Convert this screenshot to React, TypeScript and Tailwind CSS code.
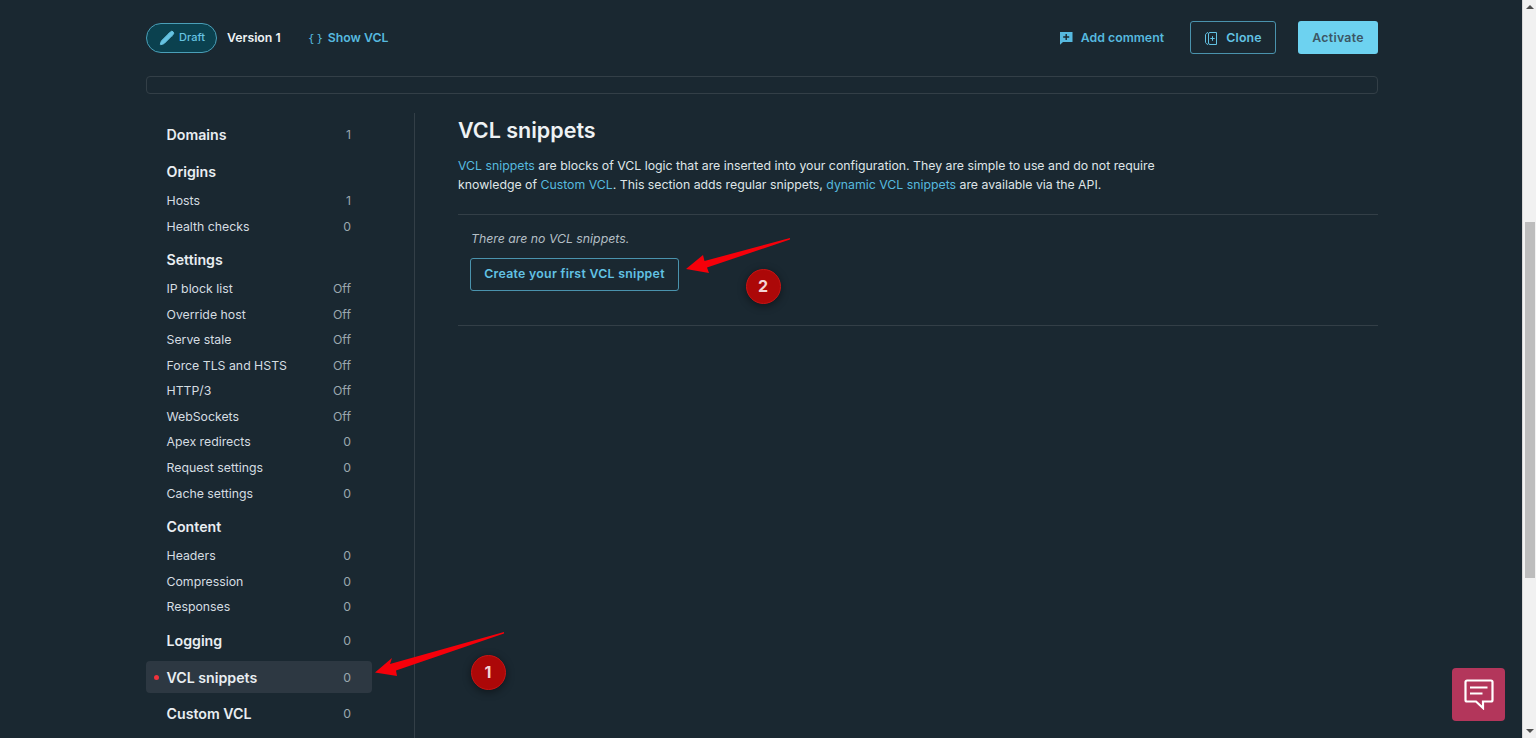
import { Pencil } from "lucide-react"

type Row = { label: string; value?: string }
type Section = { title: string; value?: string; active?: boolean; rows?: Row[] }

const sections: Section[] = [
  { title: "Domains", value: "1" },
  { title: "Origins", rows: [{ label: "Hosts", value: "1" }, { label: "Health checks", value: "0" }] },
  {
    title: "Settings",
    rows: [
      { label: "IP block list", value: "Off" },
      { label: "Override host", value: "Off" },
      { label: "Serve stale", value: "Off" },
      { label: "Force TLS and HSTS", value: "Off" },
      { label: "HTTP/3", value: "Off" },
      { label: "WebSockets", value: "Off" },
      { label: "Apex redirects", value: "0" },
      { label: "Request settings", value: "0" },
      { label: "Cache settings", value: "0" },
    ],
  },
  { title: "Content", rows: [{ label: "Headers", value: "0" }, { label: "Compression", value: "0" }, { label: "Responses", value: "0" }] },
  { title: "Logging", value: "0" },
  { title: "VCL snippets", value: "0", active: true },
  { title: "Custom VCL", value: "0" },
]

function Sidebar() {
  return (
    <nav className="flex w-[226px] shrink-0 flex-col gap-[4.8px] pt-[6px]">
      {sections.map((s) => (
        <div key={s.title}>
          <div className={`relative flex h-8 items-center justify-between rounded-[4px] pl-[20.5px] pr-[21px] ${s.active ? "bg-[#2d3842]" : ""}`}>
            {s.active && <span className="absolute left-[8px] top-[14px] size-[5px] rounded-full bg-[#f0323c]" />}
            <span className="text-[14.2px] font-semibold text-[#e9eef1]">{s.title}</span>
            {s.value && <span className="pt-[1px] text-[12.3px] text-[#9aa7ae]">{s.value}</span>}
          </div>
          {s.rows?.map((r) => (
            <div key={r.label} className="flex h-[25.6px] items-center justify-between pl-[20.5px] pr-[21px] pt-[1px] text-[12.3px] leading-none">
              <span className="text-[#d5dde1]">{r.label}</span>
              <span className="text-[#9aa7ae]">{r.value}</span>
            </div>
          ))}
        </div>
      ))}
    </nav>
  )
}

function Arrow({ points }: { points: string }) {
  return (
    <svg className="pointer-events-none absolute left-0 top-0" width="1536" height="738">
      <polygon points={points} fill="#f5000a" />
    </svg>
  )
}

function Marker({ n, className }: { n: number; className: string }) {
  return (
    <div className={`absolute flex size-[35px] items-center justify-center rounded-full border border-[#c81414] bg-[#ac0808] text-[16px] font-bold text-[#f3d5d5] shadow-[0_2px_8px_rgba(0,0,0,0.45)] ${className}`}>
      {n}
    </div>
  )
}

export default function App() {
  return (
    <div className="relative flex h-[738px] overflow-hidden bg-[#1a2831] font-['Inter',sans-serif]">
      <div className="w-[1522px] shrink-0 pl-[146px] pr-[144px]">
        {/* Version bar */}
        <header className="flex h-[76px] items-center pb-[1px]">
          <div className="flex h-[30px] w-[71px] items-center gap-[4px] rounded-full border border-[#4a9fb8] bg-[#0b414f] pl-[12px] text-[11px] font-medium text-[#66c3e2]">
            <Pencil size={16} fill="#66c3e2" strokeWidth={1.5} />
            Draft
          </div>
          <span className="ml-[10px] pt-[2px] text-[12.3px] font-semibold text-[#eef2f4]">Version 1</span>
          <span className="ml-[27px] flex items-center gap-[3px] pt-[1px] text-[12.3px] font-semibold text-[#56b9df]">
            <span className="font-['DejaVu_Sans',sans-serif] text-[11px] font-normal leading-none tracking-[1.5px]">{"{}"}</span>
            Show VCL
          </span>
          <div className="ml-auto flex items-center">
            <svg width="14" height="14" viewBox="0 0 14 14" className="mr-[8px]">
              <path fillRule="evenodd" fill="#56b9df" d="M1 1h12.500v10H4l-3 2.800zM6.500 3v2.300H4.200v1.400h2.300V9h1.400V6.700h2.300V5.300H7.900V3z" />
            </svg>
            <span className="pt-[1px] text-[12.3px] font-semibold text-[#56b9df]">Add comment</span>
            <button className="ml-[26px] flex h-[33px] w-[86px] items-center justify-center gap-[8px] rounded-[3px] border border-[#4a93ad] pt-[2px] text-[12.3px] font-semibold tracking-[0.2px] text-[#62c2e4]">
              <svg width="14" height="15" viewBox="0 0 14 15" fill="none" stroke="#62c2e4" strokeWidth="1" className="-mt-[1px]">
                <path d="M6 1.500h6.500v12H6A1.500 1.500 0 0 1 4.500 12V3A1.500 1.500 0 0 1 6 1.500zM8.500 5.200v4.600M6.300 7.500h4.400M4 1.500C2.500 2 1.500 3 1.500 4v7c0 1 1 2 2.500 2.500" />
              </svg>
              Clone
            </button>
            <button className="ml-[22px] h-[33px] w-[80px] rounded-[3px] bg-[#6dd2f0] pt-[2px] text-[12.3px] font-semibold tracking-[0.3px] text-[#3c5664]">
              Activate
            </button>
          </div>
        </header>
        <div className="h-[18px] rounded-[4px] border border-[#333f47]" />

        <div className="mt-[19px] flex">
          <Sidebar />
          <div className="ml-[42px] h-[640px] w-px shrink-0 bg-[#333f47]" />
          <main className="ml-[43px] flex-1">
            <h2 className="mt-[4px] text-[21.5px] font-semibold leading-[26px] text-[#eef2f4]">VCL snippets</h2>
            <p className="mt-[13px] max-w-[720px] text-[12.3px] leading-[19px] text-[#dfe5e8]">
              <span className="text-[#56b9df]">VCL snippets</span> are blocks of VCL logic that are inserted into your configuration. They are simple to use and do not require
              <br />
              knowledge of <span className="text-[#56b9df]">Custom VCL</span>. This section adds regular snippets, <span className="text-[#56b9df]">dynamic VCL snippets</span> are available via the API.
            </p>
            <div className="mt-[20px] h-[112px] border-y border-[#333f47] pl-[12px] pt-[16px]">
              <p className="pl-[1px] text-[12.3px] italic leading-[16px] text-[#b4bfc5]">There are no VCL snippets.</p>
              <button className="mt-[11px] h-[33px] w-[209px] rounded-[3px] border border-[#4a93ad] text-[12.3px] font-semibold tracking-[0.3px] text-[#62c2e4]">
                Create your first VCL snippet
              </button>
            </div>
          </main>
        </div>
      </div>

      {/* Scrollbar */}
      <div className="relative w-[14px] shrink-0 border-l border-[#d8d8d8] bg-[#f1f1f1]">
        <div className="absolute left-[2px] top-[222px] h-[356px] w-[10px] bg-[#bdbdbd]" />
        <div className="absolute left-[3px] top-[5px] size-0 border-x-[4px] border-b-[4px] border-x-transparent border-b-[#505050]" />
        <div className="absolute bottom-[5px] left-[3px] size-0 border-x-[4px] border-t-[4px] border-x-transparent border-t-[#505050]" />
      </div>

      {/* Annotations */}
      <Arrow points="375,672.500 392,658 390,664 504,632 504,633.500 396,670.500 397,676" />
      <Arrow points="686,269 703,255 704.500,261 790,238 790,239.500 707,267.500 709,273" />
      <Marker n={1} className="left-[470.5px] top-[654.5px]" />
      <Marker n={2} className="left-[745.5px] top-[268.5px]" />

      <button className="absolute left-[1452px] top-[668px] flex size-[53px] items-center justify-center rounded-[4px] bg-[#b3365b]">
        <svg width="30" height="31" viewBox="0 0 30 31" fill="none" stroke="#fff" strokeWidth="2.200">
          <path d="M3 1.500h24a1.500 1.500 0 0 1 1.500 1.500v18a1.500 1.500 0 0 1-1.500 1.500h-8V29l-7-6.500H3A1.500 1.500 0 0 1 1.500 21V3A1.500 1.500 0 0 1 3 1.500z" />
          <path d="M6 8.500h17.500M6 14.500h12.500" />
        </svg>
      </button>
    </div>
  )
}
